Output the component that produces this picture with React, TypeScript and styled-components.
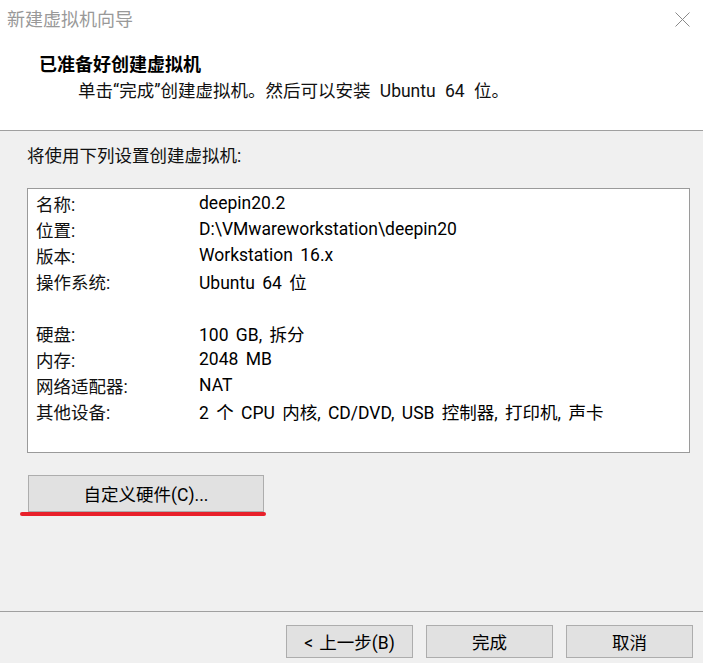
import React from 'react';
import styled, { createGlobalStyle } from 'styled-components';

const GlobalStyle = createGlobalStyle`
  html, body {
    margin: 0;
    padding: 0;
    background: #f0f0f0;
  }
  body {
    font-family: Roboto, "Noto Sans CJK SC", sans-serif;
    color: #000;
  }
`;

interface SummaryRow {
  label: string;
  value: string;
}

const rows: SummaryRow[] = [
  { label: '名称:', value: 'deepin20.2' },
  { label: '位置:', value: 'D:\\VMwareworkstation\\deepin20' },
  { label: '版本:', value: 'Workstation 16.x' },
  { label: '操作系统:', value: 'Ubuntu 64 位' },
  { label: '', value: '' },
  { label: '硬盘:', value: '100 GB, 拆分' },
  { label: '内存:', value: '2048 MB' },
  { label: '网络适配器:', value: 'NAT' },
  { label: '其他设备:', value: '2 个 CPU 内核, CD/DVD, USB 控制器, 打印机, 声卡' },
];

// --- 窗口 ---
const Window = styled.div`
  width: 703px;
  height: 663px;
  display: flex;
  flex-direction: column;
  background: #f0f0f0;
  font-size: 17.5px;
  overflow: hidden;
`;

// --- 头部 ---
const Header = styled.div`
  height: 130px;
  background: #fff;
  border-bottom: 1px solid #a0a0a0;
  display: flex;
  flex-direction: column;
`;

const TitleBar = styled.div`
  height: 40px;
  display: flex;
  align-items: center;
  justify-content: space-between;
  padding: 0 13px 0 7px;
`;

const WindowTitle = styled.span`
  color: #999;
  font-size: 18px;
  line-height: 20px;
`;

const CloseButton = styled.button`
  width: 16px;
  height: 16px;
  padding: 0;
  border: none;
  background: none;
  display: flex;
  align-items: center;
  justify-content: center;
  margin-top: -1px;
`;

const Heading = styled.div`
  display: flex;
  flex-direction: column;
  padding: 12px 0 0 39px;
`;

const HeadingTitle = styled.h1`
  margin: 0;
  font-size: 18px;
  font-weight: bold;
  line-height: 26px;
`;

const HeadingSub = styled.p`
  margin: 0;
  padding-left: 39px;
  line-height: 26px;
  color: #111;
  word-spacing: 5px;
`;

// --- 内容 ---
const Body = styled.div`
  flex: 1;
  display: flex;
  flex-direction: column;
  padding: 12px 13px 0 27px;
`;

const Intro = styled.div`
  line-height: 26px;
  color: #111;
`;

const SummaryBox = styled.div`
  margin-top: 19px;
  height: 265px;
  box-sizing: border-box;
  background: #fff;
  border: 1px solid #9a9a9a;
  padding: 1px 8px 0;
  display: flex;
  flex-direction: column;
`;

const Row = styled.div`
  display: grid;
  grid-template-columns: 163px 1fr;
  height: 26px;
  align-items: center;
  white-space: nowrap;
`;

const Label = styled.span`
  color: #111;
`;

const Value = styled.span`
  color: #000;
  word-spacing: 3px;
`;

const CustomizeWrap = styled.div`
  position: relative;
  margin: 22px 0 0 1px;
  align-self: flex-start;

  &::after {
    content: '';
    position: absolute;
    left: -8px;
    right: -2px;
    bottom: -4px;
    height: 4px;
    border-radius: 2px;
    background: #e8202a;
  }
`;

const DialogButton = styled.button<{ $wide?: boolean }>`
  width: ${(p) => (p.$wide ? '236px' : '127px')};
  height: ${(p) => (p.$wide ? '37px' : '33px')};
  box-sizing: border-box;
  background: #e1e1e1;
  border: 1px solid #adadad;
  font-family: Roboto, "Noto Sans CJK SC", sans-serif;
  font-size: 17.5px;
  color: #000;
  padding: 0;
  display: flex;
  align-items: center;
  justify-content: center;
  word-spacing: 2px;
`;

// --- 底部 ---
const Footer = styled.div`
  height: 52px;
  box-sizing: border-box;
  border-top: 1px solid #a0a0a0;
  display: flex;
  justify-content: flex-end;
  align-items: flex-start;
  gap: 13px;
  padding: 13px 10px 0 0;
`;

const App: React.FC = () => {
  return (
    <>
      <GlobalStyle />
      <Window>
        <Header>
          <TitleBar>
            <WindowTitle>新建虚拟机向导</WindowTitle>
            <CloseButton aria-label="关闭">
              <svg width="15" height="15" viewBox="0 0 15 15">
                <path d="M0.5 0.5 L14.5 14.5 M14.5 0.5 L0.5 14.5" stroke="#8a8a8a" strokeWidth="1" fill="none" />
              </svg>
            </CloseButton>
          </TitleBar>
          <Heading>
            <HeadingTitle>已准备好创建虚拟机</HeadingTitle>
            <HeadingSub>单击“完成”创建虚拟机。然后可以安装 Ubuntu 64 位。</HeadingSub>
          </Heading>
        </Header>

        <Body>
          <Intro>将使用下列设置创建虚拟机:</Intro>
          <SummaryBox>
            {rows.map((row, i) => (
              <Row key={i}>
                <Label>{row.label}</Label>
                <Value>{row.value}</Value>
              </Row>
            ))}
          </SummaryBox>
          <CustomizeWrap>
            <DialogButton $wide>自定义硬件(C)...</DialogButton>
          </CustomizeWrap>
        </Body>

        <Footer>
          <DialogButton>&lt; 上一步(B)</DialogButton>
          <DialogButton>完成</DialogButton>
          <DialogButton>取消</DialogButton>
        </Footer>
      </Window>
    </>
  );
};

export default App;
